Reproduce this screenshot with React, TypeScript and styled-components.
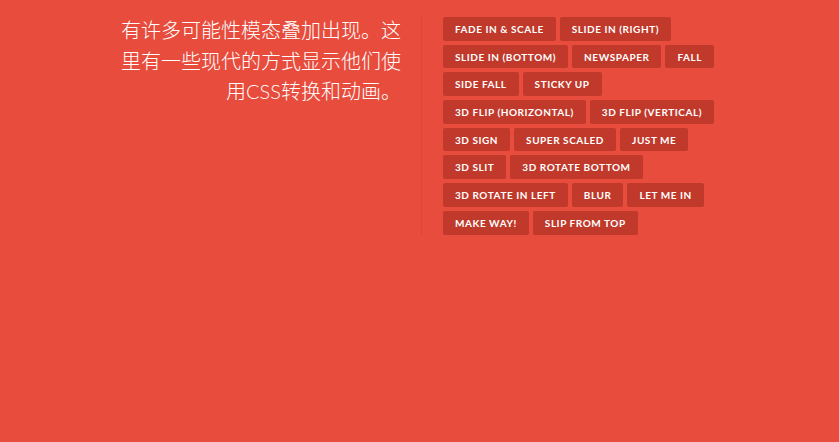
import styled, { createGlobalStyle } from "styled-components";

const GlobalStyle = createGlobalStyle`
  html, body {
    margin: 0;
    padding: 0;
    background: #e74c3c;
    height: 100%;
  }
  body {
    font-family: Lato, "Noto Sans CJK SC", sans-serif;
    color: #fff;
  }
`;

const Page = styled.div`
  display: flex;
  align-items: stretch;
  padding-top: 15px;
`;

const Intro = styled.div`
  box-sizing: border-box;
  width: 422px;
  padding: 0 20px 0 110px;
  border-right: 1px solid #d8473a;
`;

const Lead = styled.p`
  margin: 0;
  text-align: right;
  font-family: Lato, "Noto Sans CJK SC", sans-serif;
  font-size: 20px;
  font-weight: 300;
  line-height: 30.5px;
`;

const Triggers = styled.div`
  display: flex;
  flex-wrap: wrap;
  align-content: flex-start;
  gap: 4px;
  width: 300px;
  padding: 2px 0 0 21px;
`;

const Trigger = styled.button`
  height: 23.7px;
  padding: 0 12px;
  border: none;
  border-radius: 2px;
  background: #c0392b;
  color: #fff;
  font-family: Lato, sans-serif;
  font-size: 10px;
  font-weight: 700;
  letter-spacing: 0.55px;
  text-transform: uppercase;
  cursor: pointer;
  &:hover {
    background: #a5281b;
  }
`;

const effects = [
  "Fade in & Scale",
  "Slide in (right)",
  "Slide in (bottom)",
  "Newspaper",
  "Fall",
  "Side Fall",
  "Sticky Up",
  "3D Flip (horizontal)",
  "3D Flip (vertical)",
  "3D Sign",
  "Super Scaled",
  "Just Me",
  "3D Slit",
  "3D Rotate Bottom",
  "3D Rotate In Left",
  "Blur",
  "Let me in",
  "Make way!",
  "Slip from top",
];

export default function App() {
  return (
    <>
      <GlobalStyle />
      <Page>
        <Intro>
          <Lead>有许多可能性模态叠加出现。这里有一些现代的方式显示他们使用CSS转换和动画。</Lead>
        </Intro>
        <Triggers>
          {effects.map((e) => (
            <Trigger key={e}>{e}</Trigger>
          ))}
        </Triggers>
      </Page>
    </>
  );
}
